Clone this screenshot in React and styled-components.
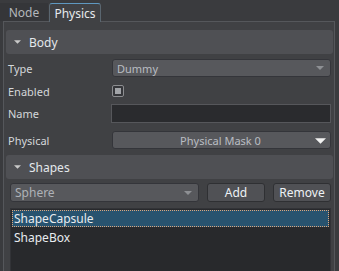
import styled, { createGlobalStyle } from 'styled-components'

const Global = createGlobalStyle`
  html, body {
    margin: 0;
    padding: 0;
    background: #3a3b3e;
  }
  body {
    font-family: "Noto Sans", "Liberation Sans", sans-serif;
    font-size: 11px;
    color: #d6d8da;
  }
`

function Triangle({ size = 7, color = '#c9c9c9' }) {
  return (
    <svg width={size} height={Math.ceil(size / 2)} viewBox="0 0 8 4">
      <polygon points="0,0 8,0 4,4" fill={color} />
    </svg>
  )
}

function App() {
  return (
    <Page>
      <Global />
      <TabBar>
        <Tab>Node</Tab>
        <Tab active>Physics</Tab>
      </TabBar>
      <Pane>
        <SectionHeader>
          <Triangle />
          <span>Body</span>
        </SectionHeader>
        <Form>
          <Row height={18} top={5}>
            <Label>Type</Label>
            <Combo>
              <span>Dummy</span>
              <Triangle size={8} color="#8e9094" />
            </Combo>
          </Row>
          <Row height={12} top={8}>
            <Label>Enabled</Label>
            <Check />
          </Row>
          <Row height={19} top={7}>
            <Label>Name</Label>
            <Input />
          </Row>
          <Row height={18} top={8}>
            <Label>Physical</Label>
            <Combo centered>
              <span>Physical Mask 0</span>
              <ArrowRight>
                <Triangle size={11} color="#f2f2f2" />
              </ArrowRight>
            </Combo>
          </Row>
        </Form>
        <SectionHeader top={6}>
          <Triangle />
          <span>Shapes</span>
        </SectionHeader>
        <ShapeBar>
          <ShapeCombo>
            <span>Sphere</span>
            <Triangle size={8} color="#8e9094" />
          </ShapeCombo>
          <Button>Add</Button>
          <Button>Remove</Button>
        </ShapeBar>
        <List>
          <Item selected>ShapeCapsule</Item>
          <Item>ShapeBox</Item>
        </List>
      </Pane>
    </Page>
  )
}

const Page = styled.div`
  width: 339px;
  height: 271px;
  overflow: hidden;
  background: #3a3b3e;
  display: flex;
  flex-direction: column;
`

const TabBar = styled.div`
  display: flex;
  height: 21px;
  padding-top: 3px;
  box-sizing: border-box;
  gap: 1px;
`

const Tab = styled.div`
  display: flex;
  align-items: center;
  justify-content: center;
  font-size: 12px;
  box-sizing: border-box;
  height: 18px;
  ${p =>
    p.active
      ? `
    width: 52px;
    background: #404144;
    color: #e6eaee;
    border: 1px solid #5a6670;
    border-top: 1px solid #5f98c0;
    border-bottom: none;
    border-radius: 3px 3px 0 0;
    height: 19px;
    margin-bottom: -1px;
    position: relative;
    z-index: 1;
  `
      : `
    background: #353639;
    color: #b4b8bc;
    width: 48px;
  `}
`

const Pane = styled.div`
  flex: 1;
  margin-left: 3px;
  width: 332px;
  box-sizing: border-box;
  background: #404144;
  border: 1px solid #55575b;
  border-bottom: none;
  padding: 8px 1px 0 2px;
  display: flex;
  flex-direction: column;
`

const SectionHeader = styled.div`
  height: 24px;
  margin-top: ${p => p.top || 0}px;
  background: #4f5054;
  border-radius: 3px;
  display: flex;
  align-items: center;
  gap: 8px;
  padding-left: 8px;
  font-size: 12px;
  color: #e4e8ec;
  flex-shrink: 0;
`

const Form = styled.div`
  display: flex;
  flex-direction: column;
`

const Row = styled.div`
  display: flex;
  align-items: center;
  height: ${p => p.height}px;
  margin-top: ${p => p.top}px;
`

const Label = styled.div`
  width: 106px;
  padding-left: 2px;
  box-sizing: border-box;
  color: #d4d7da;
`

const Combo = styled.div`
  flex: 1;
  height: 18px;
  margin-right: 2px;
  box-sizing: border-box;
  background: #57585c;
  border: 1px solid #34353a;
  border-radius: 3px;
  display: flex;
  align-items: center;
  justify-content: ${p => (p.centered ? 'center' : 'space-between')};
  padding: 0 6px 0 4px;
  color: #b9bdc2;
  position: relative;
`

const ArrowRight = styled.div`
  position: absolute;
  right: 4px;
  top: 6px;
  display: flex;
`

const Check = styled.div`
  width: 12px;
  height: 12px;
  box-sizing: border-box;
  border: 1px solid #8c8d90;
  border-radius: 2px;
  background: #35363a;
  display: flex;
  align-items: center;
  justify-content: center;
  &::after {
    content: '';
    width: 6px;
    height: 6px;
    background: #a2a4a8;
  }
`

const Input = styled.div`
  flex: 1;
  height: 19px;
  margin-right: 2px;
  margin-left: -1px;
  box-sizing: border-box;
  background: #2a2b2e;
  border: 1px solid #56575b;
`

const ShapeBar = styled.div`
  display: flex;
  height: 19px;
  margin: 4px 2px 0 4px;
  gap: 8px;
  flex-shrink: 0;
`

const ShapeCombo = styled.div`
  width: 189px;
  box-sizing: border-box;
  background: #57585c;
  border: 1px solid #34353a;
  border-radius: 3px;
  display: flex;
  align-items: center;
  justify-content: space-between;
  padding: 0 6px 0 4px;
  color: #aeb2b7;
  font-size: 12px;
`

const Button = styled.div`
  flex: 1;
  box-sizing: border-box;
  background: #505155;
  border: 1px solid #2f3033;
  border-radius: 3px;
  display: flex;
  align-items: center;
  justify-content: center;
  color: #eef2f6;
  font-size: 12px;
`

const List = styled.div`
  flex: 1;
  margin: 6px 2px 0 4px;
  background: #28292c;
  border: 1px solid #323337;
  border-bottom: none;
  padding: 1px 1px 0;
  display: flex;
  flex-direction: column;
`

const Item = styled.div`
  height: 17px;
  box-sizing: border-box;
  display: flex;
  align-items: center;
  padding-left: 2px;
  font-size: 12px;
  color: #e8ecf0;
  margin-bottom: 2px;
  ${p =>
    p.selected &&
    `
    background: #28536f;
    border: 1px dotted #dba67e;
    padding-left: 1px;
  `}
`

export default App
